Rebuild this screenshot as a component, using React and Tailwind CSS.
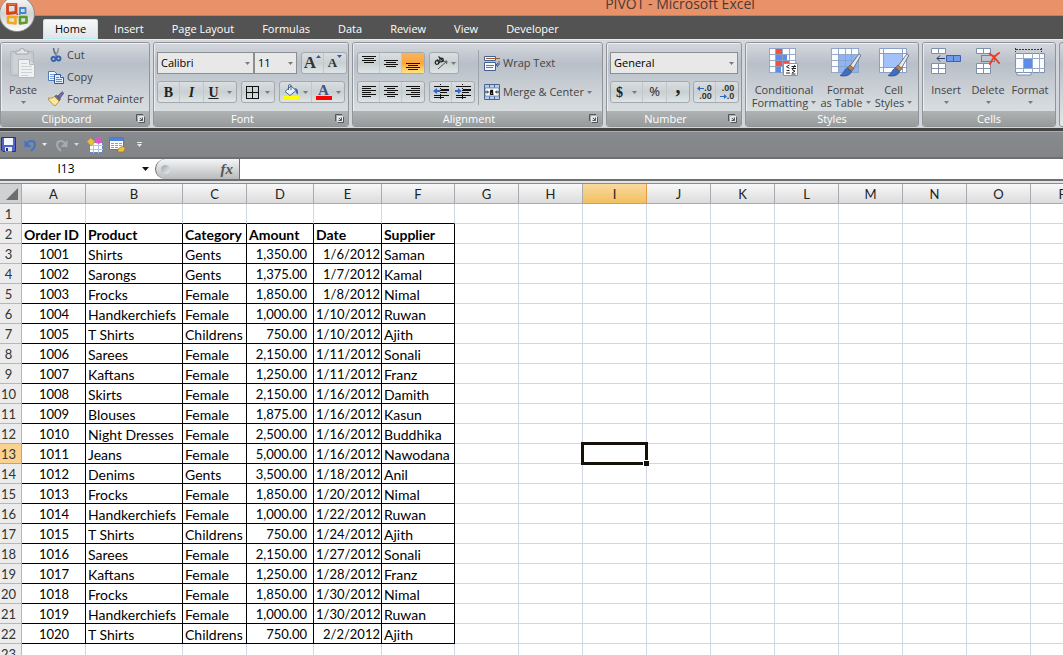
import { useState } from "react";
import clsx from "clsx";

const TABS = ["Home", "Insert", "Page Layout", "Formulas", "Data", "Review", "View", "Developer"];

const COLUMNS = [
  { name: "A", width: 64 },
  { name: "B", width: 97 },
  { name: "C", width: 64 },
  { name: "D", width: 67 },
  { name: "E", width: 68 },
  { name: "F", width: 73 },
  ...["G", "H", "I", "J", "K", "L", "M", "N", "O", "P"].map((name) => ({ name, width: 64 })),
];

const HEADINGS = ["Order ID", "Product", "Category", "Amount", "Date", "Supplier"];

const ORDERS = [
  ["1001", "Shirts", "Gents", "1,350.00", "1/6/2012", "Saman"],
  ["1002", "Sarongs", "Gents", "1,375.00", "1/7/2012", "Kamal"],
  ["1003", "Frocks", "Female", "1,850.00", "1/8/2012", "Nimal"],
  ["1004", "Handkerchiefs", "Female", "1,000.00", "1/10/2012", "Ruwan"],
  ["1005", "T Shirts", "Childrens", "750.00", "1/10/2012", "Ajith"],
  ["1006", "Sarees", "Female", "2,150.00", "1/11/2012", "Sonali"],
  ["1007", "Kaftans", "Female", "1,250.00", "1/11/2012", "Franz"],
  ["1008", "Skirts", "Female", "2,150.00", "1/16/2012", "Damith"],
  ["1009", "Blouses", "Female", "1,875.00", "1/16/2012", "Kasun"],
  ["1010", "Night Dresses", "Female", "2,500.00", "1/16/2012", "Buddhika"],
  ["1011", "Jeans", "Female", "5,000.00", "1/16/2012", "Nawodana"],
  ["1012", "Denims", "Gents", "3,500.00", "1/18/2012", "Anil"],
  ["1013", "Frocks", "Female", "1,850.00", "1/20/2012", "Nimal"],
  ["1014", "Handkerchiefs", "Female", "1,000.00", "1/22/2012", "Ruwan"],
  ["1015", "T Shirts", "Childrens", "750.00", "1/24/2012", "Ajith"],
  ["1016", "Sarees", "Female", "2,150.00", "1/27/2012", "Sonali"],
  ["1017", "Kaftans", "Female", "1,250.00", "1/28/2012", "Franz"],
  ["1018", "Frocks", "Female", "1,850.00", "1/30/2012", "Nimal"],
  ["1019", "Handkerchiefs", "Female", "1,000.00", "1/30/2012", "Ruwan"],
  ["1020", "T Shirts", "Childrens", "750.00", "2/2/2012", "Ajith"],
];

const ROWS = Array.from({ length: 23 }, (_, i) => i + 1);

const valueAt = (row, col) => {
  if (row === 2) return HEADINGS[col] ?? "";
  return ORDERS[row - 3]?.[col] ?? "";
};

/* ---------- icons ---------- */

const Arrow = ({ className = "text-[#777b80]" }) => (
  <svg className={clsx("shrink-0", className)} width="5" height="3" viewBox="0 0 5 3">
    <path d="M0 0h5L2.500 3z" fill="currentColor" />
  </svg>
);

const OfficeLogo = () => (
  <svg width="24" height="24" viewBox="0 0 24 24" fill="none" strokeLinejoin="round">
    <path d="M2.500 2.500h8.500v8L2.500 11.500z" stroke="#d8421a" strokeWidth="2.800" />
    <path d="M2.500 2.200h8.500" stroke="#f08a4a" strokeWidth="1" />
    <path d="M15 6h5.500v5H15z" stroke="#3f87cf" strokeWidth="1.800" />
    <path d="M3 15h7.500v6.500L3 20.500z" stroke="#f3a81c" strokeWidth="2.600" />
    <path d="M15 15h6.500v5.500l-6.500 1z" stroke="#5c9c2c" strokeWidth="2.600" />
    <path d="M11.500 11.500h1.500V13h-1.500z" fill="#d8421a" />
    <path d="M11.500 14h1.500v1.500h-1.500z" fill="#f3a81c" />
    <path d="M14 11.500h1.500V13H14z" fill="#3f87cf" />
    <path d="M14 14h1.500v1.500H14z" fill="#5c9c2c" />
  </svg>
);

const PasteIcon = () => (
  <svg width="26" height="31" viewBox="0 0 26 31">
    <rect x="0.500" y="3.500" width="23" height="24" rx="1.500" fill="#c4c9cd" stroke="#b2b7bc" />
    <rect x="3" y="6" width="18" height="19" fill="#ced2d6" />
    <path d="M6 6V3h3.500a2.500 2.500 0 0 1 5 0H18v3z" fill="#e4e6e8" stroke="#a3a8ad" />
    <path d="M8.500 11.500h11l5 5v13h-16z" fill="#eff1f2" stroke="#b4b9be" />
    <path d="M19.500 11.500v5h5" fill="#d9dcdf" stroke="#b4b9be" />
    <path d="M11 15.500h6M11 18.500h11M11 21.500h11M11 24.500h11M11 27.500h7" stroke="#cdd1d4" />
  </svg>
);

const CutIcon = () => (
  <svg width="16" height="16" viewBox="0 0 16 16" fill="none">
    <path d="M5.500 1c0 4 2 6 3.500 8.500" stroke="#5f6b7d" strokeWidth="1.500" />
    <path d="M10.500 1c0 4-2 6-3.500 8.500" stroke="#8a94a3" strokeWidth="1.500" />
    <circle cx="5.500" cy="12" r="2" stroke="#3462ac" strokeWidth="1.800" />
    <circle cx="10.500" cy="11.500" r="2" stroke="#3462ac" strokeWidth="1.800" />
  </svg>
);

const CopyIcon = () => (
  <svg width="16" height="16" viewBox="0 0 16 16">
    <path d="M.5 2.500h6l3 3v6h-9z" fill="#f5f9ff" stroke="#5579b5" />
    <path d="M2 5.500h4M2 7.500h4M2 9.500h4" stroke="#7fa4dd" />
    <path d="M6.500 5.500h6l3 3v6h-9z" fill="#e3eeff" stroke="#2f57a0" />
    <path d="M12.500 5.500v3h3" fill="#fff" stroke="#2f57a0" />
    <path d="M8 8.500h3M8 10.500h6M8 12.500h6" stroke="#5b8bd8" />
  </svg>
);

const PainterIcon = () => (
  <svg width="16" height="16" viewBox="0 0 16 16">
    <path d="M9.500 5.500 14 .7l1.700 1.500-4 5.300z" fill="#7b6fa8" stroke="#3f3a62" strokeWidth=".7" />
    <path d="M6.500 5.500 8.500 4l4 4-1.500 2z" fill="#5d6fa3" stroke="#34426b" strokeWidth=".7" />
    <path d="M6.500 5.500 11 10c-1 2-2 3.700-4.500 5L1 9.500 0 7c3 .6 5-.3 6.500-1.500z" fill="#f8dd8a" stroke="#a9853c" strokeWidth=".8" />
    <path d="m3 8.500 5 4.500M5 7.500l4.500 4" stroke="#fff5cf" />
  </svg>
);

const BordersIcon = () => (
  <svg width="13" height="13" viewBox="0 0 13 13" shapeRendering="crispEdges">
    <path d="M.5.5h12v12H.5zM6.500 0v13M0 6.500h13" fill="none" stroke="#111" />
  </svg>
);

const FillIcon = () => (
  <svg width="16" height="16" viewBox="0 0 16 16">
    <path d="M2 7.500 8 2l5 4.500-6 5z" fill="#eaf1fa" stroke="#4a6591" />
    <path d="M5.500 6V1.500C5.500.3 8 .3 8 1.500V6" fill="none" stroke="#4a6591" />
    <path d="M11.500 4c3 .3 4 2.500 3.300 6.500-1.500-.7-2.300-2.300-1.800-4z" fill="#2f66bd" />
    <path d="M0 12h16v4H0z" fill="#ffff00" />
  </svg>
);

const LINES = {
  top: ["1 1.500h14", "3 3.500h10", "1 5.500h14", "3 7.500h10"],
  middle: ["1 5.500h14", "3 7.500h10", "1 9.500h14", "3 11.500h10"],
  bottom: ["1 8.500h14", "3 10.500h10", "1 12.500h14", "3 14.500h10"],
};

const VAlignIcon = ({ at }) => (
  <svg width="16" height="16" viewBox="0 0 16 16" shapeRendering="crispEdges">
    {LINES[at].map((d) => (
      <path key={d} d={`M${d}`} stroke="#111" />
    ))}
  </svg>
);

const HALIGN = {
  left: "M1 2.500h14M1 4.500h9M1 6.500h14M1 8.500h9M1 10.500h14M1 12.500h9",
  center: "M1 2.500h14M4 4.500h8M1 6.500h14M4 8.500h8M1 10.500h14M4 12.500h8",
  right: "M1 2.500h14M6 4.500h9M1 6.500h14M6 8.500h9M1 10.500h14M6 12.500h9",
};

const HAlignIcon = ({ at }) => (
  <svg width="16" height="16" viewBox="0 0 16 16" shapeRendering="crispEdges">
    <path d={HALIGN[at]} stroke="#111" />
  </svg>
);

const IndentIcon = ({ more }) => (
  <svg width="16" height="16" viewBox="0 0 16 16">
    <g shapeRendering="crispEdges" stroke="#111">
      <path d="M1 2.500h15M8 8.500h6M1 11.500h15M1 13.500h10" />
      <path d="M8 5.500h8" strokeWidth="2" />
      <path d="M7.500 0v16" strokeDasharray="1 1" />
    </g>
    <path
      d={more ? "M0 6h3V4l3.500 3L3 10V8H0z" : "M7 6H4V4L0 7l4 3V8h3z"}
      fill="#2f66c8"
    />
  </svg>
);

const OrientationIcon = () => (
  <svg width="16" height="16" viewBox="0 0 16 16" fill="none">
    <g stroke="#222" strokeWidth="1.200">
      <circle cx="4" cy="7.500" r="1.800" />
      <path d="m4 4.500 3 3.500M5.500 1.500l5 5" />
      <circle cx="8.500" cy="5" r="1.800" />
    </g>
    <path d="m5 14 9-8M14 6l-3.200.5M14 6l-.5 3" stroke="#555" />
  </svg>
);

const WrapIcon = () => (
  <svg width="16" height="16" viewBox="0 0 16 16">
    <path d="M.5 1.500h11v4H.5z" fill="#f7f9fc" stroke="#40618f" />
    <path d="M2 3.500h14" stroke="#9c5a2d" />
    <path d="M.5 7.500h11v8H.5z" fill="#f7f9fc" stroke="#40618f" />
    <path d="M2 10.500h8M2 12.500h7" stroke="#b1632c" />
    <path d="M15 6v4h-3M14 8l-2 2 2 2" fill="none" stroke="#3c5f9b" />
  </svg>
);

const MergeIcon = () => (
  <svg width="16" height="16" viewBox="0 0 16 16">
    <path d="M.5.5h15v15H.5z" fill="#b9cdee" stroke="#46658f" />
    <path d="M5.500.5v3M10.500.5v3M5.500 12.500v3M10.500 12.500v3" stroke="#46658f" />
    <path d="M1 4h14v8H1z" fill="#fff" stroke="#46658f" strokeWidth=".7" />
    <path d="M1 8h3M12 8h3M3 6.500 4.500 8 3 9.500M13 6.500 11.500 8 13 9.500" stroke="#222" fill="none" />
    <path d="M6.200 6.500h2.300v4M8.500 8H6.500v2.300h3" stroke="#111" strokeWidth="1.300" fill="none" />
  </svg>
);

const BlueArrow = ({ flip }) => (
  <svg width="7" height="5" viewBox="0 0 7 5" className={clsx(flip && "rotate-180")}>
    <path d="M0 2.500 3 0v2h4v1H3v2z" fill="#2f66c8" />
  </svg>
);

const DecimalIcon = ({ more }) => (
  <span className="flex flex-col font-['Liberation_Sans'] text-[9px] leading-[8px] font-bold text-[#333]">
    <span className="flex items-center justify-end">
      {more && <BlueArrow />}
      {more ? ".0" : ".00"}
    </span>
    <span className="flex items-center justify-end">
      {!more && <BlueArrow flip />}
      {more ? ".00" : ".0"}
    </span>
  </span>
);

const Brush = () => (
  <g>
    <path d="m20 18 8.500-11.500c1-1 2.500 0 2 1.500L23 21z" fill="#e4e7ec" stroke="#555d69" strokeWidth=".8" />
    <path d="m17.500 20 2.500-3 4 3.500-2.500 3z" fill="#b98048" stroke="#714a22" strokeWidth=".7" />
    <path d="M17.500 20c-3 .5-3 5-7.500 7.500 4.500 1.200 10 .5 11.500-4z" fill="#3e6fc0" stroke="#27498a" strokeWidth=".7" />
  </g>
);

const CondFormatIcon = () => (
  <svg width="32" height="30" viewBox="0 0 32 30">
    <path d="M1 1h27v24H1z" fill="#fbfcff" />
    <path d="M8 1h6v6H8zM8 13h13v6H8z" fill="#f0523f" />
    <path d="M8 7h11v6H8zM8 19h5v6H8z" fill="#5b8ee8" />
    <path d="M1 .5h27M1 6.500h27M1 12.500h27M1 18.500h27M1 24.500h27M1.500 0v25M7.500 0v25M14.500 0v25M21.500 0v25M27.500 0v25" stroke="#8ba0c4" strokeWidth=".9" />
    <path d="M15.500 15.500h14v12h-14z" fill="#fff" stroke="#8494ab" />
    <path d="m21.500 17-3 1.700 3 1.700M18.500 22.500h3M18 25h4M23.500 18.500h4.500M23.500 20.500h4.500M27 17l-2.500 4.500M24 21.500l3 1.700-3 1.800M23.500 26h4" stroke="#222" fill="none" />
  </svg>
);

const FormatTableIcon = () => (
  <svg width="32" height="30" viewBox="0 0 32 30">
    <path d="M1 1h28v24H1z" fill="#fbfcff" />
    <path d="M8 7h21v18H8z" fill="#8db4f5" />
    <path d="M1 .5h28M1 6.500h28M1 12.500h28M1 18.500h28M1 24.500h28M1.500 0v25M8.500 0v25M15.500 0v25M21.500 0v25M28.500 0v25" stroke="#8ba0c4" strokeWidth=".9" />
    <Brush />
  </svg>
);

const CellStylesIcon = () => (
  <svg width="32" height="30" viewBox="0 0 32 30">
    <path d="M1.500.5h27v24h-27z" fill="#fbfcff" stroke="#8ba0c4" />
    <path d="M6 5h18v14H6z" fill="#a3c1fa" />
    <path d="M1 5.500h28M1 19.500h28M5.500 0v25M24.500 0v25" stroke="#8ba0c4" />
    <Brush />
  </svg>
);

const InsertIcon = () => (
  <svg width="32" height="30" viewBox="0 0 32 30">
    <g fill="#fff" stroke="#7f90ac">
      <path d="M1.500.5h14v5h-14zM8.500.5v5M1.500 15.500h14v10h-14zM8.500 15.500v10M1.500 20.500h14" />
      <path d="M16.500 7.500h14v6h-14z" fill="#6f9cea" stroke="#3c64ae" />
      <path d="M23.500 7.500v6" stroke="#3c64ae" />
    </g>
    <path d="M7 10.500h8M10 7.500l-3 3 3 3" stroke="#2c3f63" fill="none" />
  </svg>
);

const DeleteIcon = () => (
  <svg width="32" height="30" viewBox="0 0 32 30">
    <g fill="#fff" stroke="#7f90ac">
      <path d="M4.500.5h14v5h-14zM11.500.5v5M4.500 15.500h14v10h-14zM11.500 15.500v10M4.500 20.500h14" />
      <path d="M9.500 7.500h13v6h-13z" fill="none" stroke="#2c3f63" strokeDasharray="1 1" />
    </g>
    <path d="M17.500 5.500c3 2 6 5 9.500 9.500M27 5c-4 2.500-7 6.500-9 11" stroke="#ee3c24" strokeWidth="2" fill="none" strokeLinecap="round" />
  </svg>
);

const FormatIcon = () => (
  <svg width="32" height="30" viewBox="0 0 32 30">
    <path d="M1.500 0v4M27.500 0v4M2 1.500h25" stroke="#23395f" strokeDasharray="2 1" />
    <path d="M3 24v3h14v-3" fill="#fff" stroke="#7f90ac" />
    <path d="M1.500 5.500h29v19h-29z" fill="#fbfcff" stroke="#7f90ac" />
    <path d="M1 10.500h30M1 20.500h30M9.500 5v20M18.500 5v20M25.500 5v20" stroke="#9aabca" />
    <path d="M10 11h8v9h-8z" fill="#5b8ee8" />
  </svg>
);

const Launcher = () => (
  <svg width="9" height="9" viewBox="0 0 9 9" fill="none">
    <path d="M.5 7V.5H7" stroke="#53575c" />
    <path d="M2.500 2.500h5v5h-5z" fill="#d9dbdc" stroke="#e9ebec" />
    <path d="M8.500 3v5.500H3M4 4l2.500 2.500M6.500 3.500v3h-3" stroke="#53575c" />
  </svg>
);

const SaveIcon = () => (
  <svg width="15" height="15" viewBox="0 0 15 15">
    <path d="M.5.5h14v14H2l-1.500-1.500z" fill="#5163c8" stroke="#26328a" />
    <path d="M3 1h9v7H3z" fill="#f3f6fd" />
    <path d="M4 10h7v4.500H4z" fill="#e6e9f2" />
    <path d="M5 11h2v3H5z" fill="#26328a" />
  </svg>
);

const UndoIcon = ({ redo }) => (
  <svg width="13" height="14" viewBox="0 0 13 14" className={clsx(redo && "-scale-x-100")}>
    <path
      d="M3 5.500C5 2 11 2 11 6.500c0 2.500-1.500 4.500-4 6.500"
      fill="none"
      stroke={redo ? "#a5abb2" : "#4573c4"}
      strokeWidth="2"
    />
    <path d="M.5 2v7h7z" fill={redo ? "#a5abb2" : "#4573c4"} />
  </svg>
);

const PivotIcon = () => (
  <svg width="17" height="16" viewBox="0 0 17 16">
    <path d="M2.500 5.500h13v10h-13z" fill="#fff" stroke="#6c84b4" />
    <path d="M3 8.500h13M3 12.500h13M6.500 6v10M11.500 6v10" stroke="#b3c4e6" />
    <path d="M0 4.500 3.500 1 8 4.500 4 9z" fill="#eebf45" stroke="#b98a22" strokeWidth=".6" />
    <circle cx="11.500" cy="3.500" r="3.300" fill="#d65ac6" />
  </svg>
);

const FormIcon = () => (
  <svg width="17" height="16" viewBox="0 0 17 16">
    <path d="M.5.5h14v12H.5z" fill="#fff" stroke="#5976af" />
    <path d="M1 1h13v3H1z" fill="#4e83dc" />
    <path d="M2 6.500h3M6 6.500h3M10 6.500h3M2 8.500h3M6 8.500h3M10 8.500h3M2 10.500h3M6 10.500h3" stroke="#7e9ed6" />
    <path d="m9 12 4-2.500 3.500 1-2 4.500H9z" fill="#efc14b" stroke="#9b7423" strokeWidth=".7" />
  </svg>
);

/* ---------- ribbon pieces ---------- */

const Group = ({ title, launcher, className, children }) => (
  <section
    className={clsx(
      "flex h-[85px] shrink-0 flex-col overflow-hidden rounded-[3px] border border-[#909397] bg-linear-to-b from-[#d4d7dd] via-[#b9bfc8] via-25% to-[#e3e9e8]",
      className
    )}
  >
    <div className="flex min-h-0 flex-1 border-t border-l border-white/60">{children}</div>
    <div className="flex h-[15px] items-center bg-linear-to-b from-[#b0b3b4] to-[#979b9b] text-white">
      <h2 className={clsx("flex-1 text-center text-[11px] leading-[15px]", launcher && "pr-1")}>{title}</h2>
      {launcher && (
        <button aria-label={`${title} options`} className="pr-1">
          <Launcher />
        </button>
      )}
    </div>
  </section>
);

const ButtonSet = ({ children }) => (
  <div className="flex h-[22px] divide-x divide-[#c0c6ca] rounded-[3px] border border-[#a3a9ae] bg-linear-to-b from-[#dadfe1] via-[#c9d0d3] to-[#dde5e5]">
    {children}
  </div>
);

const ToolButton = ({ label, active, className = "w-[22px]", children }) => (
  <button
    aria-label={label}
    className={clsx(
      "flex items-center justify-center text-[#222]",
      active && "bg-linear-to-b from-[#f9b45c] via-[#fba53a] to-[#ffe583]",
      className
    )}
  >
    {children}
  </button>
);

const Picker = ({ label, value, className }) => (
  <div className={clsx("relative h-[22px]", className)}>
    <select
      aria-label={label}
      defaultValue={value}
      className="block h-full w-full appearance-none border border-[#8b8f94] bg-[#e8e8e8] pl-[3px] text-[11px] text-black outline-none"
    >
      <option>{value}</option>
    </select>
    <span className="pointer-events-none absolute inset-y-0 right-1 flex items-center">
      <Arrow />
    </span>
  </div>
);

const BigButton = ({ icon, lines, arrowInline, className }) => (
  <button className={clsx("flex flex-col items-center pt-1 text-[11px] leading-[13px] whitespace-nowrap text-[#444]", className)}>
    <span className="flex h-[35px] items-start">{icon}</span>
    <span>{lines[0]}</span>
    {arrowInline ? (
      <span className="flex items-center gap-[3px]">
        {lines[1]}
        <Arrow />
      </span>
    ) : (
      <span className="flex h-[13px] items-center">
        <Arrow />
      </span>
    )}
  </button>
);

const SmallButton = ({ icon, children }) => (
  <button className="flex h-[22px] items-center gap-[3px] text-[11px] whitespace-nowrap text-[#444]">
    {icon}
    {children}
  </button>
);

const Ribbon = () => (
  <div className="flex h-[89px] gap-[3px] overflow-hidden border-t border-[#e9ecee] bg-[#d3d6da] pt-[2px]">
    <Group title="Clipboard" launcher className="w-[150px]">
      <BigButton icon={<PasteIcon />} lines={["Paste"]} className="mr-1 w-[42px]" />
      <div>
        <SmallButton icon={<CutIcon />}>Cut</SmallButton>
        <SmallButton icon={<CopyIcon />}>Copy</SmallButton>
        <SmallButton icon={<PainterIcon />}>Format Painter</SmallButton>
      </div>
    </Group>

    <Group title="Font" launcher className="w-[196px]">
      <div className="flex flex-col gap-[7px] pt-2 pl-[2px]">
        <div className="flex">
          <Picker label="Font" value="Calibri" className="w-[97px]" />
          <Picker label="Font size" value="11" className="mr-1 w-[43px]" />
          <ButtonSet>
            <ToolButton label="Grow font">
              <span className="flex items-start font-['Liberation_Serif'] text-[17px] leading-4 font-bold text-[#333]">
                A
                <svg width="5" height="3" viewBox="0 0 5 3">
                  <path d="M0 3h5L2.500 0z" fill="#2f57b0" />
                </svg>
              </span>
            </ToolButton>
            <ToolButton label="Shrink font">
              <span className="flex items-start font-['Liberation_Serif'] text-[13px] leading-4 font-bold text-[#333]">
                A<Arrow className="text-[#2f57b0]" />
              </span>
            </ToolButton>
          </ButtonSet>
        </div>
        <div className="flex gap-1 font-['Liberation_Serif'] text-[14px]">
          <ButtonSet>
            <ToolButton label="Bold">
              <b>B</b>
            </ToolButton>
            <ToolButton label="Italic" className="w-6">
              <b className="italic">I</b>
            </ToolButton>
            <ToolButton label="Underline" className="w-8 gap-2">
              <b className="underline">U</b>
              <Arrow />
            </ToolButton>
          </ButtonSet>
          <ButtonSet>
            <ToolButton label="Borders" className="w-8 gap-[6px]">
              <BordersIcon />
              <Arrow />
            </ToolButton>
          </ButtonSet>
          <ButtonSet>
            <ToolButton label="Fill color" className="w-8 gap-1">
              <FillIcon />
              <Arrow />
            </ToolButton>
            <ToolButton label="Font color" className="w-8 gap-1">
              <span className="flex w-4 flex-col items-center text-[15px] leading-3 font-bold text-[#3b5688]">
                A
                <span className="h-1 w-full bg-[#ff0000]" />
              </span>
              <Arrow />
            </ToolButton>
          </ButtonSet>
        </div>
      </div>
    </Group>

    <Group title="Alignment" launcher className="w-[251px]">
      <div className="flex flex-col gap-[7px] pt-2 pl-[3px]">
        <div className="flex gap-1">
          <ButtonSet>
            <ToolButton label="Top align"><VAlignIcon at="top" /></ToolButton>
            <ToolButton label="Middle align"><VAlignIcon at="middle" /></ToolButton>
            <ToolButton label="Bottom align" active><VAlignIcon at="bottom" /></ToolButton>
          </ButtonSet>
          <ButtonSet>
            <ToolButton label="Orientation" className="w-7 gap-[2px]">
              <OrientationIcon />
              <Arrow />
            </ToolButton>
          </ButtonSet>
        </div>
        <div className="flex gap-1">
          <ButtonSet>
            <ToolButton label="Align left"><HAlignIcon at="left" /></ToolButton>
            <ToolButton label="Center"><HAlignIcon at="center" /></ToolButton>
            <ToolButton label="Align right"><HAlignIcon at="right" /></ToolButton>
          </ButtonSet>
          <ButtonSet>
            <ToolButton label="Decrease indent"><IndentIcon /></ToolButton>
            <ToolButton label="Increase indent"><IndentIcon more /></ToolButton>
          </ButtonSet>
        </div>
      </div>
      <div className="mt-[6px] mr-[5px] mb-[6px] ml-[3px] w-px bg-[#9da3aa]" />
      <div className="flex flex-col gap-[7px] pt-2">
        <SmallButton icon={<WrapIcon />}>Wrap Text</SmallButton>
        <SmallButton icon={<MergeIcon />}>
          Merge &amp; Center
          <Arrow />
        </SmallButton>
      </div>
    </Group>

    <Group title="Number" launcher className="w-[136px]">
      <div className="flex flex-col gap-[7px] pt-2 pl-[2px]">
        <Picker label="Number format" value="General" className="w-32" />
        <div className="flex gap-[3px]">
          <ButtonSet>
            <ToolButton label="Accounting format" className="w-8 gap-[9px]">
              <b className="font-['Liberation_Serif'] text-[14px]">$</b>
              <Arrow />
            </ToolButton>
            <ToolButton label="Percent style" className="w-6">
              <span className="text-[13px]">%</span>
            </ToolButton>
            <ToolButton label="Comma style">
              <b className="pb-3 font-['Liberation_Serif'] text-[20px] leading-3">,</b>
            </ToolButton>
          </ButtonSet>
          <ButtonSet>
            <ToolButton label="Increase decimal"><DecimalIcon more /></ToolButton>
            <ToolButton label="Decrease decimal"><DecimalIcon /></ToolButton>
          </ButtonSet>
        </div>
      </div>
    </Group>

    <Group title="Styles" className="w-[174px]">
      <BigButton icon={<CondFormatIcon />} lines={["Conditional", "Formatting"]} arrowInline className="w-[74px]" />
      <BigButton icon={<FormatTableIcon />} lines={["Format", "as Table"]} arrowInline className="w-[49px]" />
      <BigButton icon={<CellStylesIcon />} lines={["Cell", "Styles"]} arrowInline className="w-[47px]" />
    </Group>

    <Group title="Cells" className="w-[134px]">
      <BigButton icon={<InsertIcon />} lines={["Insert"]} className="w-[44px]" />
      <BigButton icon={<DeleteIcon />} lines={["Delete"]} className="w-10" />
      <BigButton icon={<FormatIcon />} lines={["Format"]} className="w-11" />
    </Group>

    <div className="h-[85px] min-w-4 flex-1 rounded-l-[3px] border border-[#909397] bg-linear-to-b from-[#d4d7dd] via-[#b9bfc8] via-25% to-[#e3e9e8]" />
  </div>
);

const QuickAccess = () => (
  <div className="flex h-[26px] items-center border-t border-[#a9acaf] bg-linear-to-b from-[#888b8f] to-[#828486] pl-px text-white">
    <button aria-label="Save"><SaveIcon /></button>
    <button aria-label="Undo" className="ml-2 flex items-center gap-[5px]">
      <UndoIcon />
      <Arrow className="text-[#e8eaec]" />
    </button>
    <button aria-label="Redo" className="ml-2 flex items-center gap-[6px]">
      <UndoIcon redo />
      <Arrow className="text-[#d3d6d9]" />
    </button>
    <button aria-label="PivotTable wizard" className="ml-2"><PivotIcon /></button>
    <button aria-label="Form" className="ml-[5px]"><FormIcon /></button>
    <button aria-label="Customize toolbar" className="ml-[11px] flex flex-col gap-px">
      <span className="h-px w-[5px] bg-[#e8eaec]" />
      <Arrow className="text-[#e8eaec]" />
    </button>
  </div>
);

const FormulaBar = ({ cell }) => (
  <div className="flex h-6 border-y-2 border-[#6d6f71] bg-white">
    <input
      key={cell}
      aria-label="Name box"
      defaultValue={cell}
      className="w-[132px] bg-transparent text-center text-[12px] text-black outline-none"
    />
    <button aria-label="Go to named range" className="flex w-[23px] items-center justify-center pl-1">
      <svg width="7" height="4" viewBox="0 0 7 4">
        <path d="M0 0h7L3.500 4z" fill="#111" />
      </svg>
    </button>
    <div className="flex w-[85px] items-center justify-between rounded-l-full border border-y-0 border-[#6d6f71] bg-linear-to-b from-[#f4f5f6] to-[#b9bbbd] pr-[6px] pl-[5px]">
      <span className="size-[9px] rounded-full bg-linear-to-br from-[#9da3ab] to-[#eef0f2]" />
      <button aria-label="Insert function" className="font-['Liberation_Serif'] text-[15px] leading-4 font-bold text-[#555] italic">
        fx
      </button>
    </div>
    <input aria-label="Formula" className="min-w-0 flex-1 bg-transparent px-1 text-[12px] outline-none" />
  </div>
);

/* ---------- sheet ---------- */

const cellText = (row, col) => {
  if (row === 2) return "pr-px text-left text-[14px] font-bold";
  if (col === 0) return "pr-px text-center text-[13px]";
  if (col === 3) return "pr-[6px] text-right text-[13px]";
  if (col === 4) return "pr-px text-right text-[13px]";
  return "pr-px text-left text-[14px]";
};

const Sheet = ({ selected, onSelect }) => (
  <div className="min-h-0 flex-1 overflow-hidden border-t border-[#8a8c8e] bg-white font-['Lato']">
    {/* zero width makes the fixed layout take its size from the columns alone */}
    <table className="w-0 table-fixed border-separate border-spacing-0 text-[13px] text-black">
      <colgroup>
        <col style={{ width: 22 }} />
        {COLUMNS.map((c) => (
          <col key={c.name} style={{ width: c.width }} />
        ))}
      </colgroup>
      <thead>
        <tr className="h-5 leading-[17px]">
          <th className="border-r border-b border-[#a9acaf] bg-[#cfd1d3] p-0" aria-label="Select all">
            <svg className="mr-[3px] ml-auto" width="12" height="12" viewBox="0 0 12 12">
              <path d="M12 0v12H0z" fill="#6b6d70" />
            </svg>
          </th>
          {COLUMNS.map((c) => (
            <th
              key={c.name}
              className={clsx(
                "border-r border-b px-0 pt-[2px] pb-0 font-normal text-[#222]",
                c.name === selected.col
                  ? "border-[#e39a4a] bg-linear-to-b from-[#f9d99f] to-[#f1c15f]"
                  : "border-[#a9acaf] bg-linear-to-b from-[#f8f8f8] to-[#dcdcdc]"
              )}
            >
              {c.name}
            </th>
          ))}
        </tr>
      </thead>
      <tbody>
        {ROWS.map((row) => (
          <tr key={row} className="h-5 leading-[17px]">
            <th
              className={clsx(
                "border-r border-b pt-[2px] pr-1 pb-0 pl-0 text-center font-normal text-[#333]",
                row === selected.row ? "border-[#e39a4a] bg-[#fbd18f]" : "border-[#b5b8ba] bg-[#ececec]"
              )}
            >
              {row}
            </th>
            {COLUMNS.map((c, col) => {
              const inTable = col < 6 && row >= 2 && row <= 22;
              const aboveTable = col < 6 && row === 1;
              const isSelected = row === selected.row && c.name === selected.col;
              return (
                <td
                  key={c.name}
                  onClick={() => onSelect({ row, col: c.name })}
                  className={clsx(
                    "relative border-r border-b pt-[2px] pb-0 pl-[2px] whitespace-nowrap",
                    inTable ? "border-black" : "border-[#d0d7e5]",
                    aboveTable && "border-b-black",
                    cellText(row, col)
                  )}
                >
                  {valueAt(row, col)}
                  {isSelected && (
                    <span className="absolute -top-[2px] -right-[2px] -bottom-[2px] -left-[2px] z-10 border-[3px] border-[#151108]">
                      <span className="absolute -right-1 -bottom-1 size-[6px] border-t border-l border-white bg-[#151108]" />
                    </span>
                  )}
                </td>
              );
            })}
          </tr>
        ))}
      </tbody>
    </table>
  </div>
);

const App = () => {
  const [tab, setTab] = useState("Home");
  const [selected, setSelected] = useState({ row: 13, col: "I" });

  return (
    <div className="flex h-screen flex-col overflow-hidden bg-[#4b4b4b] font-['Open_Sans',sans-serif]">
      <header className="relative">
        <div className="flex h-4 items-center justify-center overflow-hidden border-b border-[#c87c58] bg-[#e99168] pl-[297px]">
          <h1 className="pb-2 text-[14px] leading-4 whitespace-nowrap text-[#4c3a33]">PIVOT - Microsoft Excel</h1>
        </div>
        <nav className="flex h-[23px] items-end bg-[#535353] pl-[43px]">
          {TABS.map((name) => (
            <button
              key={name}
              onClick={() => setTab(name)}
              className={clsx(
                "rounded-t-[3px] text-[11px] leading-5 whitespace-nowrap",
                name === tab
                  ? "mr-[2px] bg-linear-to-b from-[#f8fafa] to-[#dfe5e8] px-3 text-black ring-1 ring-[#b8ecf5] ring-inset"
                  : "px-[14px] text-white"
              )}
            >
              {name}
            </button>
          ))}
        </nav>
        {/* office button hangs over the title bar and the tabs */}
        <button
          aria-label="Office menu"
          className="absolute -top-[4px] -left-px z-20 flex size-9 items-center justify-center rounded-full border border-[#8c8c8c] bg-linear-to-b from-[#fafafa] via-[#d2d3d5] to-[#fdfdfd]"
        >
          <OfficeLogo />
        </button>
      </header>
      <Ribbon />
      <div className="h-[3px] bg-[#444]" />
      <QuickAccess />
      <FormulaBar cell={`${selected.col}${selected.row}`} />
      <div className="h-[2px] bg-[#e3e4e5]" />
      <Sheet selected={selected} onSelect={setSelected} />
    </div>
  );
};

export default App;
